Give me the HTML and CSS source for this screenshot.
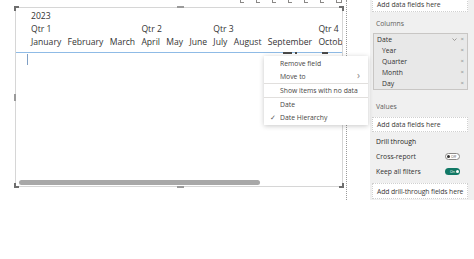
FILE: index.html
```html
<!DOCTYPE html>
<html lang="en">
  <head>
    <meta charset="UTF-8" />
    <title>Matrix - Date Hierarchy</title>
    <link rel="stylesheet" href="styles.css">
  </head>
  <body>
    <div class="app">
      <!-- Report canvas -->
      <div class="canvas">
        <div class="visual-toolbar">
          <span class="tb-icon"></span>
          <span class="tb-icon"></span>
          <span class="tb-icon"></span>
          <span class="tb-icon"></span>
          <span class="tb-icon"></span>
          <span class="tb-icon"></span>
          <span class="tb-icon square"></span>
        </div>
        <div class="page-edge"></div>

        <div class="visual">
          <div class="matrix-head">
            <div class="year">2023</div>
            <div class="quarters">
              <div class="quarter">
                <div class="qtr">Qtr 1</div>
                <div class="months">
                  <span>January</span><span>February</span><span>March</span>
                </div>
              </div>
              <div class="quarter">
                <div class="qtr">Qtr 2</div>
                <div class="months">
                  <span>April</span><span>May</span><span>June</span>
                </div>
              </div>
              <div class="quarter">
                <div class="qtr">Qtr 3</div>
                <div class="months">
                  <span>July</span><span>August</span><span>September</span>
                </div>
              </div>
              <div class="quarter">
                <div class="qtr">Qtr 4</div>
                <div class="months">
                  <span>October</span>
                </div>
              </div>
            </div>
          </div>
          <div class="row-cursor"></div>
          <div class="h-scroll"></div>

          <!-- selection handles -->
          <span class="corner tl"></span>
          <span class="corner tr"></span>
          <span class="corner bl"></span>
          <span class="corner br"></span>
          <span class="handle top"></span>
          <span class="handle left"></span>
          <span class="handle bottom"></span>
        </div>

        <!-- Field context menu -->
        <div class="peek">
          <span class="peek-a"></span><span class="peek-b"></span><span class="peek-c"></span>
        </div>
        <ul class="menu">
          <li>Remove field</li>
          <li class="has-sub">Move to <span class="chev">&#8250;</span></li>
          <li class="sep">Show items with no data</li>
          <li class="sep">Date</li>
          <li class="checked"><span class="check">&#10003;</span>Date Hierarchy</li>
        </ul>
      </div>

      <!-- Build pane -->
      <aside class="panel">
        <div class="drop-box first">Add data fields here</div>
        <div class="label">Columns</div>
        <div class="well">
          <div class="well-row">Date
            <span class="acts">
              <svg class="caret" width="5" height="3" viewBox="0 0 5 3"><path d="M0.5 0.5 L2.5 2.5 L4.5 0.5" fill="none" stroke="#8a8886" stroke-width="0.8"/></svg>
              <span class="x">&times;</span>
            </span>
          </div>
          <div class="well-row sub">Year <span class="x">&times;</span></div>
          <div class="well-row sub">Quarter <span class="x">&times;</span></div>
          <div class="well-row sub">Month <span class="x">&times;</span></div>
          <div class="well-row sub">Day <span class="x">&times;</span></div>
        </div>
        <div class="label values">Values</div>
        <div class="drop-box">Add data fields here</div>
        <div class="label heading">Drill through</div>
        <div class="toggle-row">
          Cross-report
          <span class="toggle off"><span class="knob"></span>Off</span>
        </div>
        <div class="toggle-row keep">
          Keep all filters
          <span class="toggle on">On<span class="knob"></span></span>
        </div>
        <div class="drop-box last">Add drill-through fields here</div>
      </aside>
    </div>
  </body>
</html>
```

FILE: styles.css
```css
/* Global */
body {
  margin: 0;
  padding: 0;
  background: #fff;
  font-family: 'Segoe UI', 'Open Sans', sans-serif;
  color: #252423;
  overflow: hidden;
}

.app {
  display: flex;
  align-items: flex-start;
  width: 474px;
  height: 259px;
}

/* Canvas */
.canvas {
  position: relative;
  width: 370px;
  height: 259px;
  flex-shrink: 0;
}

.visual-toolbar {
  position: absolute;
  top: -4px;
  left: 240px;
  display: flex;
  gap: 12px;
}

.tb-icon {
  width: 4px;
  height: 7px;
  border-bottom: 1px solid #8a8886;
  border-left: 1px solid #8a8886;
  box-sizing: border-box;
}

.tb-icon.square {
  width: 6px;
  border: 1px solid #8a8886;
}

.page-edge {
  position: absolute;
  left: 346px;
  top: 0;
  height: 200px;
  border-left: 1px dotted #9a9a9a;
}

.visual {
  position: relative;
  margin: 7px 0 0 15px;
  width: 328px;
  height: 180px;
  box-sizing: border-box;
  border: 1px solid #d6d6d6;
  display: flex;
  flex-direction: column;
}

.matrix-head {
  padding: 2px 0 3px 15px;
  border-bottom: 1px solid #8fbbe6;
  font-size: 8.6px;
  line-height: 13px;
  color: #333;
  white-space: nowrap;
  overflow: hidden;
}

.quarters {
  display: flex;
}

.months {
  display: flex;
}

.months span {
  padding-right: 6.3px;
}

.row-cursor {
  width: 1px;
  height: 11px;
  margin: 1px 0 0 11px;
  background: #7f9fc4;
}

.h-scroll {
  margin: auto 0 1px 3px;
  width: 241px;
  height: 5px;
  border-radius: 3px;
  background: #a8a8a8;
}

/* Selection handles */
.corner {
  position: absolute;
  width: 3px;
  height: 3px;
  border-color: #6e6e6e;
  border-style: solid;
  border-width: 0;
}

.corner.tl { left: -2px; top: -2px; border-left-width: 2px; border-top-width: 2px; }
.corner.tr { right: -2px; top: -2px; border-right-width: 2px; border-top-width: 2px; }
.corner.bl { left: -2px; bottom: -2px; border-left-width: 2px; border-bottom-width: 2px; }
.corner.br { right: -2px; bottom: -2px; border-right-width: 2px; border-bottom-width: 2px; }

.handle {
  position: absolute;
  background: #9a9a9a;
}

.handle.top { left: 161px; top: -2px; width: 7px; height: 2px; }
.handle.bottom { left: 161px; bottom: -2px; width: 7px; height: 2px; }
.handle.left { left: -2px; top: 86px; width: 2px; height: 7px; }

/* Context menu */
.peek {
  position: absolute;
  left: 283px;
  top: 52px;
  display: flex;
  gap: 3px;
}

.peek span {
  height: 2px;
  background: #4a4a4a;
}

.peek-a { width: 9px; }
.peek-b { width: 2px; }
.peek-c { width: 6px; margin-left: 22px; }

.menu {
  position: absolute;
  left: 264px;
  top: 56px;
  width: 104px;
  margin: 0;
  padding: 1px 0;
  list-style: none;
  background: #fff;
  box-shadow: 0 1px 5px rgba(0, 0, 0, 0.22);
  font-size: 6.8px;
  color: #484644;
}

.menu li {
  position: relative;
  height: 13px;
  line-height: 13px;
  padding-left: 16px;
}

.menu li.sep {
  border-top: 1px solid #e1dfdd;
}

.menu .chev {
  position: absolute;
  right: 8px;
  top: -1px;
  font-size: 10px;
  color: #8a8886;
}

.menu .check {
  position: absolute;
  left: 6px;
  color: #605e5c;
}

/* Build pane */
.panel {
  width: 104px;
  box-sizing: border-box;
  padding: 0 6px 1px 2px;
  background: #f0f0f0;
  font-size: 6.8px;
  color: #3b3a39;
  white-space: nowrap;
}

.drop-box {
  height: 15px;
  line-height: 14px;
  box-sizing: border-box;
  padding-left: 4px;
  background: #fff;
  border: 1px dotted #d0d0d0;
  color: #3b3a39;
  overflow: hidden;
}

.drop-box.first {
  margin-top: -3px;
}

.drop-box.last {
  height: 16px;
  line-height: 15px;
  margin-top: 6px;
  letter-spacing: -0.1px;
}

.label {
  height: 12px;
  line-height: 12px;
  margin-top: 6px;
  padding-left: 4px;
  color: #605e5c;
}

.label.values {
  margin-top: 11px;
}

.label.heading {
  margin-top: 4px;
  color: #252423;
}

.label.values + .drop-box {
  margin-top: 4px;
}

.well {
  margin: 3px 0 0 1px;
  border: 1px solid #c8c6c4;
  background: #e8e8e8;
}

.well-row {
  display: flex;
  justify-content: space-between;
  align-items: center;
  height: 11px;
  line-height: 11px;
  padding: 0 3px 0 3px;
  color: #323130;
}

.well-row.sub {
  padding-left: 8px;
}

.well-row .x {
  color: #8a8886;
  font-size: 6px;
}

.acts {
  display: flex;
  align-items: center;
  gap: 4px;
}

.toggle-row {
  display: flex;
  justify-content: space-between;
  align-items: center;
  height: 12px;
  margin-top: 2px;
  padding: 0 8px 0 4px;
  color: #323130;
}

.toggle-row.keep {
  margin-top: 3px;
}

.toggle {
  display: flex;
  align-items: center;
  gap: 1px;
  width: 15px;
  height: 7px;
  box-sizing: border-box;
  border-radius: 4px;
  font-size: 3.6px;
  padding: 0 1px;
}

.toggle .knob {
  width: 3px;
  height: 3px;
  border-radius: 50%;
}

.toggle.off {
  border: 1px solid #8a8886;
  background: #fff;
  color: #605e5c;
}

.toggle.off .knob {
  background: #323130;
}

.toggle.on {
  justify-content: flex-end;
  background: #117865;
  color: #fff;
}

.toggle.on .knob {
  background: #fff;
}
```
